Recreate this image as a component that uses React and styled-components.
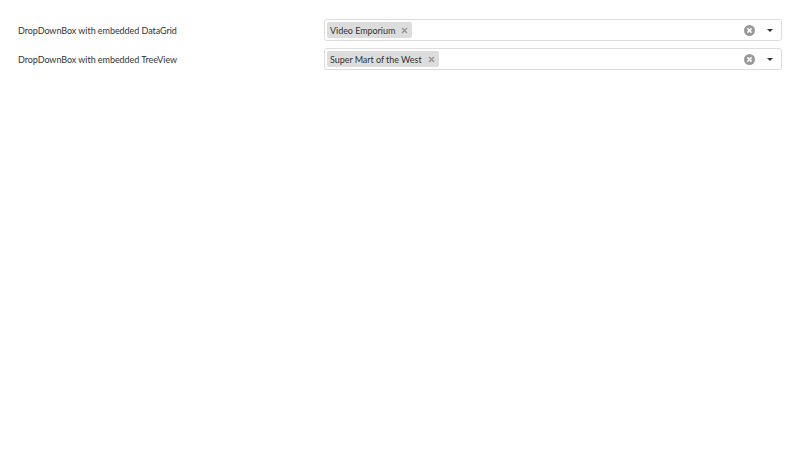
import React from 'react';
import styled, {createGlobalStyle} from 'styled-components';

const Global = createGlobalStyle`
  body {
    margin: 0;
    background: #fff;
    font-family: "Segoe UI", Lato, "Liberation Sans", sans-serif;
    font-size: 9px;
    letter-spacing: -0.05px;
    color: #333;
  }
`;

const fields = [
    {label: 'DropDownBox with embedded DataGrid', tag: 'Video Emporium'},
    {label: 'DropDownBox with embedded TreeView', tag: 'Super Mart of the West'},
];

const App = () => (
    <Page>
        <Global/>
        {fields.map(f =>
            <Field key={f.label}>
                <Label>{f.label}</Label>
                <Box>
                    <Tags>
                        <Tag>
                            {f.tag}
                            <TagRemove>
                                <svg width="7" height="7" viewBox="0 0 7 7">
                                    <path d="M1 1L6 6M6 1L1 6" stroke="#999" strokeWidth="1.6"/>
                                </svg>
                            </TagRemove>
                        </Tag>
                    </Tags>
                    <Clear>
                        <svg width="11" height="11" viewBox="0 0 11 11">
                            <circle cx="5.5" cy="5.5" r="5.5" fill="#999"/>
                            <path d="M3.4 3.4L7.6 7.6M7.6 3.4L3.4 7.6" stroke="#fff" strokeWidth="1.5"/>
                        </svg>
                    </Clear>
                    <Arrow>
                        <svg width="6" height="3" viewBox="0 0 6 3">
                            <path d="M0 0H6L3 3Z" fill="#333"/>
                        </svg>
                    </Arrow>
                </Box>
            </Field>
        )}
    </Page>
);

const Page = styled.div`
  padding: 19px 18px 0 18px;
  display: flex;
  flex-direction: column;
  gap: 7px;
`;

const Field = styled.div`
  display: flex;
  align-items: center;
`;

const Label = styled.div`
  width: 306px;
  color: #333;
`;

const Box = styled.div`
  width: 458px;
  height: 22px;
  border: 1px solid #ddd;
  border-radius: 3px;
  display: flex;
  align-items: center;
  box-sizing: border-box;
`;

const Tags = styled.div`
  flex: 1;
  display: flex;
  padding-left: 2px;
`;

const Tag = styled.div`
  background: #ddd;
  border-radius: 2px;
  height: 16px;
  display: flex;
  align-items: center;
  padding: 0 4px 0 3px;
  gap: 6px;
  color: #333;
`;

const TagRemove = styled.span`
  display: flex;
`;

const Clear = styled.div`
  display: flex;
  margin-right: 12px;
`;

const Arrow = styled.div`
  display: flex;
  margin-right: 8px;
`;

export default App;
